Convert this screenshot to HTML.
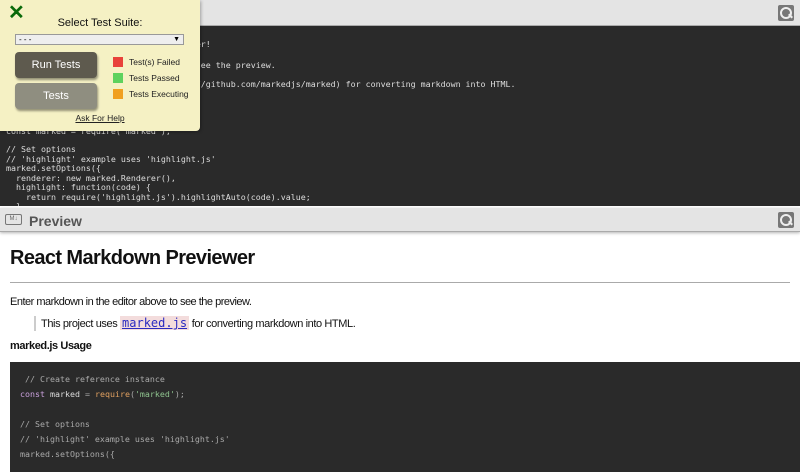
<!DOCTYPE html>
<html><head><style>
*{margin:0;padding:0;box-sizing:border-box}
body{width:800px;height:450px;overflow:hidden;background:#fff;font-family:"Liberation Sans",sans-serif;position:relative}
.tb{position:absolute;left:0;width:800px;background:#e4e4e4;border-bottom:1px solid #aaa;box-shadow:0 1px 3px rgba(0,0,0,.3)}
.tb .t{position:absolute;left:29px;font-weight:bold;font-size:14px;color:#555}
.zm{position:absolute;right:6px;width:16px;height:16px;background:#777;border-radius:2px}
.zm::before{content:"";position:absolute;left:2px;top:2px;width:8px;height:8px;border:2px solid #eee;border-radius:50%}
.zm::after{content:"";position:absolute;left:10px;top:10px;width:5px;height:2px;background:#eee;transform:rotate(45deg)}
.ed{position:absolute;top:26px;left:0;width:800px;height:180px;background:#2a2a2a;color:#ddd;font-family:"DejaVu Sans Mono",monospace;font-size:8.3px;overflow:hidden}
.ed div{position:absolute;left:6px;white-space:pre;line-height:10px}
.panel{position:absolute;left:0;top:0;width:200px;height:131px;background:#f5f1c4;border-radius:0 0 4px 0;box-shadow:1px 1px 3px rgba(0,0,0,.3)}
.btn{position:absolute;left:15px;width:82px;height:26px;border-radius:4px;color:#fff;font-size:11px;text-align:center;line-height:26px;box-shadow:1px 2px 2px rgba(0,0,0,.4)}
.lg{position:absolute;left:113px;font-size:8.5px;color:#222}
.lg i{display:inline-block;width:10px;height:10px;vertical-align:-2px;margin-right:6px}
.pv{position:absolute;top:232px;left:0;width:800px;padding:0 0 0 10px;color:#111}
pre.cb{background:#2a2a2a;color:#aaa;font-family:"DejaVu Sans Mono",monospace;font-size:8.3px;line-height:15px;padding:10px 10px;margin-top:0}
</style></head><body>
<div class="tb" style="top:0;height:26px"><span class="t" style="top:6px">Editor</span><div class="zm" style="top:5px"></div></div>
<div class="ed">
<div style="top:13px"># Welcome to my React Markdown Previewer!</div>
<div style="top:34px">Enter markdown in the editor above to see the preview.</div>
<div style="top:53px">&gt; This project uses [marked.js](https://github.com/markedjs/marked) for converting markdown into HTML.</div>
<div style="top:72px">&#96;&#96;&#96;</div>
<div style="top:81px">  js</div>
<div style="top:90px">// Create reference instance</div>
<div style="top:100px">const marked = require('marked');</div>
<div style="top:118px">// Set options</div>
<div style="top:128px">// 'highlight' example uses 'highlight.js'</div>
<div style="top:137px">marked.setOptions({</div>
<div style="top:147px">  renderer: new marked.Renderer(),</div>
<div style="top:156px">  highlight: function(code) {</div>
<div style="top:166px">    return require('highlight.js').highlightAuto(code).value;</div>
<div style="top:175px">  },</div>
</div>
<div class="tb" style="top:208px;height:24px"><span style="position:absolute;left:5px;top:6px;width:17px;height:11px;border:1px solid #777;border-radius:2px;font-size:6px;color:#666;text-align:center;line-height:9px">M↓</span><span class="t" style="top:5px">Preview</span><div class="zm" style="top:4px"></div></div>
<div class="pv">
<h1 style="font-size:20px;letter-spacing:-0.6px;font-weight:bold;padding-top:15px;height:51px;border-bottom:1px solid #aaa;margin-right:10px">React Markdown Previewer</h1>
<p style="font-size:11px;letter-spacing:-0.5px;margin-top:13px">Enter markdown in the editor above to see the preview.</p>
<p style="font-size:11px;letter-spacing:-0.4px;margin:8px 0 0 24px;padding-left:5px;border-left:2px solid #ccc;height:15px">This project uses <span style="background:#f3dcdc;padding:0 2px;font-family:'DejaVu Sans Mono',monospace;color:#2a2ac0;text-decoration:underline;font-size:12px;letter-spacing:0">marked.js</span> for converting markdown into HTML.</p>
<p style="font-size:11px;letter-spacing:-0.4px;font-weight:bold;margin-top:9px;margin-bottom:10px">marked.js Usage</p>
<pre class="cb"> // Create reference instance
<span style="color:#c9a0dc">const</span> <span style="color:#ddd">marked</span> = <span style="color:#e0a060">require</span>(<span style="color:#8fc48f">'marked'</span>);

// Set options
// 'highlight' example uses 'highlight.js'
marked.setOptions({</pre>
</div>
<div class="panel">
<div style="position:absolute;left:8px;top:3px;color:#0a6a0a;font-size:20px;font-weight:bold;line-height:20px">✕</div>
<div style="position:absolute;left:0;width:200px;top:17px;text-align:center;font-size:11px;color:#111">Select Test Suite:</div>
<div style="position:absolute;left:15px;top:34px;width:169px;height:11px;background:#eee;border:1px solid #999;font-size:8px;line-height:9px;padding-left:3px">- - -<span style="position:absolute;right:3px;font-size:7px">▼</span></div>
<div class="btn" style="top:52px;background:#5e5a4e">Run Tests</div>
<div class="btn" style="top:83px;background:#8f8e80">Tests</div>
<div class="lg" style="top:57px"><i style="background:#e8423a"></i>Test(s) Failed</div>
<div class="lg" style="top:73px"><i style="background:#5ed25e"></i>Tests Passed</div>
<div class="lg" style="top:89px"><i style="background:#f0a020"></i>Tests Executing</div>
<div style="position:absolute;left:0;width:200px;top:113px;text-align:center;font-size:8.5px;text-decoration:underline;color:#222">Ask For Help</div>
</div>
</body></html>
